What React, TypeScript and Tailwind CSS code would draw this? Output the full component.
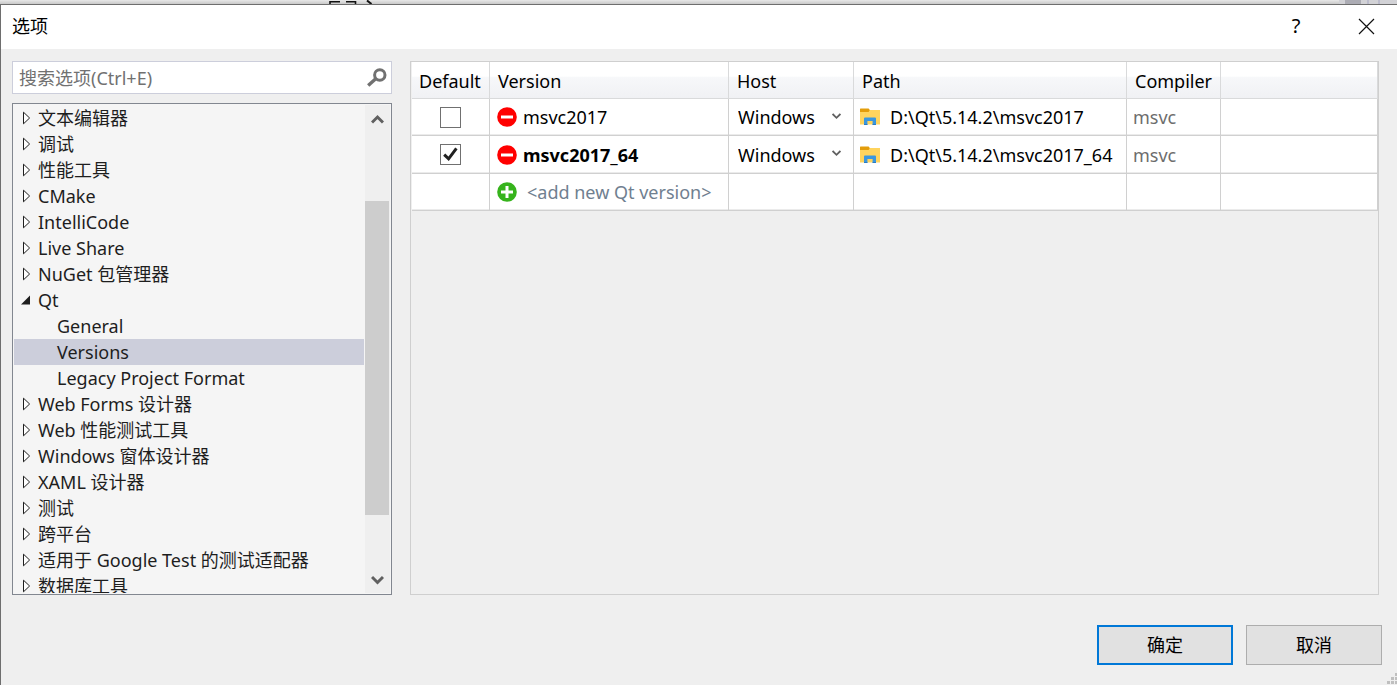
import { useState } from "react";

type TreeItem = { label: string; kind: "closed" | "open" | "child" };

const items: TreeItem[] = [
  { label: "文本编辑器", kind: "closed" },
  { label: "调试", kind: "closed" },
  { label: "性能工具", kind: "closed" },
  { label: "CMake", kind: "closed" },
  { label: "IntelliCode", kind: "closed" },
  { label: "Live Share", kind: "closed" },
  { label: "NuGet 包管理器", kind: "closed" },
  { label: "Qt", kind: "open" },
  { label: "General", kind: "child" },
  { label: "Versions", kind: "child" },
  { label: "Legacy Project Format", kind: "child" },
  { label: "Web Forms 设计器", kind: "closed" },
  { label: "Web 性能测试工具", kind: "closed" },
  { label: "Windows 窗体设计器", kind: "closed" },
  { label: "XAML 设计器", kind: "closed" },
  { label: "测试", kind: "closed" },
  { label: "跨平台", kind: "closed" },
  { label: "适用于 Google Test 的测试适配器", kind: "closed" },
  { label: "数据库工具", kind: "closed" },
];

const versions = [
  { name: "msvc2017", path: "D:\\Qt\\5.14.2\\msvc2017", compiler: "msvc" },
  { name: "msvc2017_64", path: "D:\\Qt\\5.14.2\\msvc2017_64", compiler: "msvc" },
];

function Expander({ open }: { open: boolean }) {
  return (
    <svg width="10" height="14" viewBox="0 0 10 14" className="shrink-0" aria-hidden="true">
      {open ? (
        <path d="M9 2.5V11.5H0Z" fill="#1e1e1e" />
      ) : (
        <path d="M2.5 1.2V12.8L8.6 7Z" fill="#fff" stroke="#1e1e1e" />
      )}
    </svg>
  );
}

function TreeRow({ item, selected, onSelect }: { item: TreeItem; selected: boolean; onSelect: () => void }) {
  return (
    <li>
      <button
        type="button"
        onClick={onSelect}
        className={`flex h-[26px] w-full items-center gap-[7px] whitespace-nowrap text-left leading-[26px] ${
          item.kind === "child" ? "pl-[43px]" : "pl-[7px]"
        } ${selected ? "bg-[#cccedb]" : ""}`}
      >
        {item.kind !== "child" && <Expander open={item.kind === "open"} />}
        {item.label}
      </button>
    </li>
  );
}

function RoundIcon({ plus }: { plus?: boolean }) {
  return (
    <svg width="20" height="20" viewBox="0 0 20 20" className="shrink-0" aria-hidden="true">
      <circle cx="10" cy="10" r="9.8" fill={plus ? "#36b31c" : "#f00"} />
      <path d="M4 10H16" stroke="#fff" strokeWidth="3" />
      {plus && <path d="M10 4V16" stroke="#fff" strokeWidth="3" />}
    </svg>
  );
}

function FolderIcon() {
  return (
    <svg width="20" height="18" viewBox="0 0 20 18" className="shrink-0" aria-hidden="true">
      <path d="M0 2H20V16.5H0Z" fill="#ffd45e" />
      <path d="M0 1Q0 .4 .6 .4H8.6L9.8 2L8.6 4H0Z" fill="#e39d0b" />
      <path d="M4 10.4Q4 9.4 5 9.4H15Q16 9.4 16 10.4V17H12.6V13H7.4V17H4Z" fill="#3b97de" />
      <path d="M4 16H7.4V17H4ZM12.6 16H16V17H12.6Z" fill="#2a7cc4" />
    </svg>
  );
}

const th =
  "h-[37px] border-r border-b border-[#d9dadb] bg-linear-to-b from-white from-40% via-[#f7f8fa] via-41% to-[#f0f1f4] pt-px pl-2 text-left font-normal whitespace-nowrap";
const cell = "border-r border-b border-[#d0d0d0] bg-white shadow-[inset_0_-1px_0_#ebebeb] whitespace-nowrap";

export default function App() {
  const [selected, setSelected] = useState("Versions");
  const [current, setCurrent] = useState("msvc2017_64");

  return (
    <div className="flex h-screen min-h-[400px] flex-col overflow-hidden bg-[#efefef] font-['Noto_Sans','Noto_Sans_CJK_SC',sans-serif] text-[18px] leading-6 text-black">
      <div
        className="flex h-1 shrink-0 justify-between overflow-hidden bg-linear-to-b from-[#e8e8e8] to-[#c9c9c9] pl-[328px]"
        aria-hidden="true"
      >
        <svg width="60" height="4" viewBox="0 0 60 4" fill="none" stroke="#111" strokeWidth="1.6">
          <path d="M2 4V1.8H12M18 1.8H27.5V4" />
          <path d="M39 .5L43.5 4" strokeWidth="2" />
        </svg>
        <svg width="60" height="4" viewBox="0 0 60 4">
          <path d="M2 0H60V4H2Z" fill="#d2d2d6" />
          <path d="M8 0H24V4H8Z" fill="#acacb4" />
          <path d="M30 0H32V4H30ZM41 0H43V4H41Z" fill="#bcbccc" />
        </svg>
      </div>

      <div className="flex min-h-0 flex-1 flex-col border-t border-l border-[#6e6e6e]">
        <header className="flex h-11 shrink-0 items-center bg-white pr-[22px] pb-0.5 pl-[11px]">
          <h1 className="flex-1">选项</h1>
          <button type="button" aria-label="帮助" className="w-5 text-[20px]">
            ?
          </button>
          <button type="button" aria-label="关闭" className="ml-[52px]">
            <svg width="17" height="17" viewBox="0 0 17 17" stroke="#111" strokeWidth="1.2" aria-hidden="true">
              <path d="M1 1L16 16M16 1L1 16" />
            </svg>
          </button>
        </header>

        <main className="flex min-h-0 flex-1 gap-[18px] pt-3 pr-[18px] pl-[11px]">
          <aside className="flex w-[380px] shrink-0 flex-col gap-[9px]">
            <div className="flex h-[33px] shrink-0 items-center border border-[#cccedb] bg-white pr-1 pl-1.5">
              <input
                type="text"
                aria-label="搜索选项"
                placeholder="搜索选项(Ctrl+E)"
                className="min-w-0 flex-1 bg-transparent outline-none placeholder:text-[#717171]"
              />
              <button type="button" aria-label="搜索">
                <svg width="20" height="20" viewBox="0 0 20 20" fill="none" stroke="#717171" aria-hidden="true">
                  <circle cx="12.8" cy="7" r="5.2" strokeWidth="3" />
                  <path d="M9 10.6L1.2 17.6" strokeWidth="3.4" />
                </svg>
              </button>
            </div>

            <div className="flex min-h-0 flex-1 border border-[#828790] bg-[#f5f5f5] p-px text-[#1e1e1e]">
              <ul className="min-w-0 flex-1 overflow-hidden">
                {items.map((item) => (
                  <TreeRow
                    key={item.label}
                    item={item}
                    selected={item.label === selected}
                    onSelect={() => setSelected(item.label)}
                  />
                ))}
              </ul>
              <div className="ml-px flex w-[25px] flex-col items-center bg-[#efefef]">
                <button type="button" aria-label="向上滚动" className="flex h-[27px] w-full items-center justify-center">
                  <svg width="13" height="10" viewBox="0 0 13 10" fill="none" stroke="#606060" strokeWidth="3" aria-hidden="true">
                    <path d="M1 8.5L6.5 3L12 8.5" />
                  </svg>
                </button>
                <div className="flex w-full min-h-0 flex-1 flex-col">
                  <div className="grow-69" />
                  <div className="mr-px grow-314 bg-[#cdcdcd]" />
                  <div className="grow-51" />
                </div>
                <button type="button" aria-label="向下滚动" className="flex h-[27px] w-full items-center justify-center">
                  <svg width="13" height="10" viewBox="0 0 13 10" fill="none" stroke="#606060" strokeWidth="3" aria-hidden="true">
                    <path d="M1 2L6.5 7.5L12 2" />
                  </svg>
                </button>
              </div>
            </div>
          </aside>

          <section className="min-w-0 flex-1 overflow-hidden border border-[#cfcfcf] pl-px">
            <table className="w-full table-fixed border-separate border-spacing-0">
              <colgroup>
                <col className="w-[78px]" />
                <col className="w-[239px]" />
                <col className="w-[125px]" />
                <col className="w-[273px]" />
                <col className="w-[94px]" />
                <col />
              </colgroup>
              <thead>
                <tr>
                  <th className={`${th} pl-[7px]`}>Default</th>
                  <th className={th}>Version</th>
                  <th className={th}>Host</th>
                  <th className={th}>Path</th>
                  <th className={th}>Compiler</th>
                  <th className={th} aria-label="其他" />
                </tr>
              </thead>
              <tbody>
                {versions.map((v, i) => (
                  <tr key={v.name} className={i === 0 ? "h-[37px]" : "h-[38px]"}>
                    <td className={`${cell} pr-px`}>
                      <label className="mx-auto grid size-[21px] place-items-center">
                        <input
                          type="checkbox"
                          aria-label={v.name}
                          checked={current === v.name}
                          onChange={() => setCurrent(v.name)}
                          className="peer col-start-1 row-start-1 size-[21px] appearance-none border border-[#707070] bg-white"
                        />
                        <svg
                          width="15"
                          height="15"
                          viewBox="0 0 15 15"
                          fill="none"
                          stroke="#212121"
                          strokeWidth="3"
                          className="pointer-events-none invisible col-start-1 row-start-1 peer-checked:visible"
                          aria-hidden="true"
                        >
                          <path d="M1.2 7.6L5.6 11.8L13.4 1.4" />
                        </svg>
                      </label>
                    </td>
                    <td className={`${cell} pl-[7px]`}>
                      <div className={`flex items-center gap-[6px] ${current === v.name ? "font-bold" : ""}`}>
                        <button type="button" aria-label={`删除 ${v.name}`}>
                          <RoundIcon />
                        </button>
                        {v.name}
                      </div>
                    </td>
                    <td className={`${cell} pl-[9px]`}>
                      <div className="grid items-center">
                        <select
                          aria-label={`Host ${v.name}`}
                          className="col-start-1 row-start-1 w-full appearance-none bg-transparent outline-none"
                        >
                          <option>Windows</option>
                        </select>
                        <svg
                          width="9"
                          height="7"
                          viewBox="0 0 9 7"
                          fill="none"
                          stroke="#606060"
                          strokeWidth="1.8"
                          className="pointer-events-none col-start-1 row-start-1 mr-3 mb-0.5 justify-self-end"
                          aria-hidden="true"
                        >
                          <path d="M.6 1L4.5 4.8L8.4 1" />
                        </svg>
                      </div>
                    </td>
                    <td className={`${cell} pl-[6px]`}>
                      <div className="flex items-center gap-[10px]">
                        <button type="button" aria-label={`浏览 ${v.name}`}>
                          <FolderIcon />
                        </button>
                        {v.path}
                      </div>
                    </td>
                    <td className={`${cell} pl-[6px] text-[#6d6d6d]`}>{v.compiler}</td>
                    <td className={cell} />
                  </tr>
                ))}
                <tr className="h-[37px]">
                  <td className={cell} />
                  <td className={`${cell} pl-[7px]`}>
                    <button type="button" className="flex items-center gap-[10px] text-[#708090]">
                      <RoundIcon plus />
                      &lt;add new Qt version&gt;
                    </button>
                  </td>
                  <td className={cell} />
                  <td className={cell} />
                  <td className={cell} />
                  <td className={cell} />
                </tr>
              </tbody>
            </table>
          </section>
        </main>

        <footer className="flex shrink-0 justify-end gap-[13px] pt-[30px] pr-[15px]">
          <button type="button" className="h-10 w-[136px] border-2 border-[#0078d7] bg-[#e1e1e1]">
            确定
          </button>
          <button type="button" className="h-10 w-[136px] border border-[#adadad] bg-[#e1e1e1]">
            取消
          </button>
        </footer>
        <div className="flex h-5 shrink-0 items-end justify-end">
          <svg width="10" height="12" viewBox="0 0 10 12" fill="#bfbfbf" aria-hidden="true">
            <path d="M8 0h2v3h-2zM4 4h3v3h-3zM8 4h2v3h-2zM0 8h3v3h-3zM4 8h3v3h-3zM8 8h2v3h-2z" />
          </svg>
        </div>
      </div>
    </div>
  );
}
